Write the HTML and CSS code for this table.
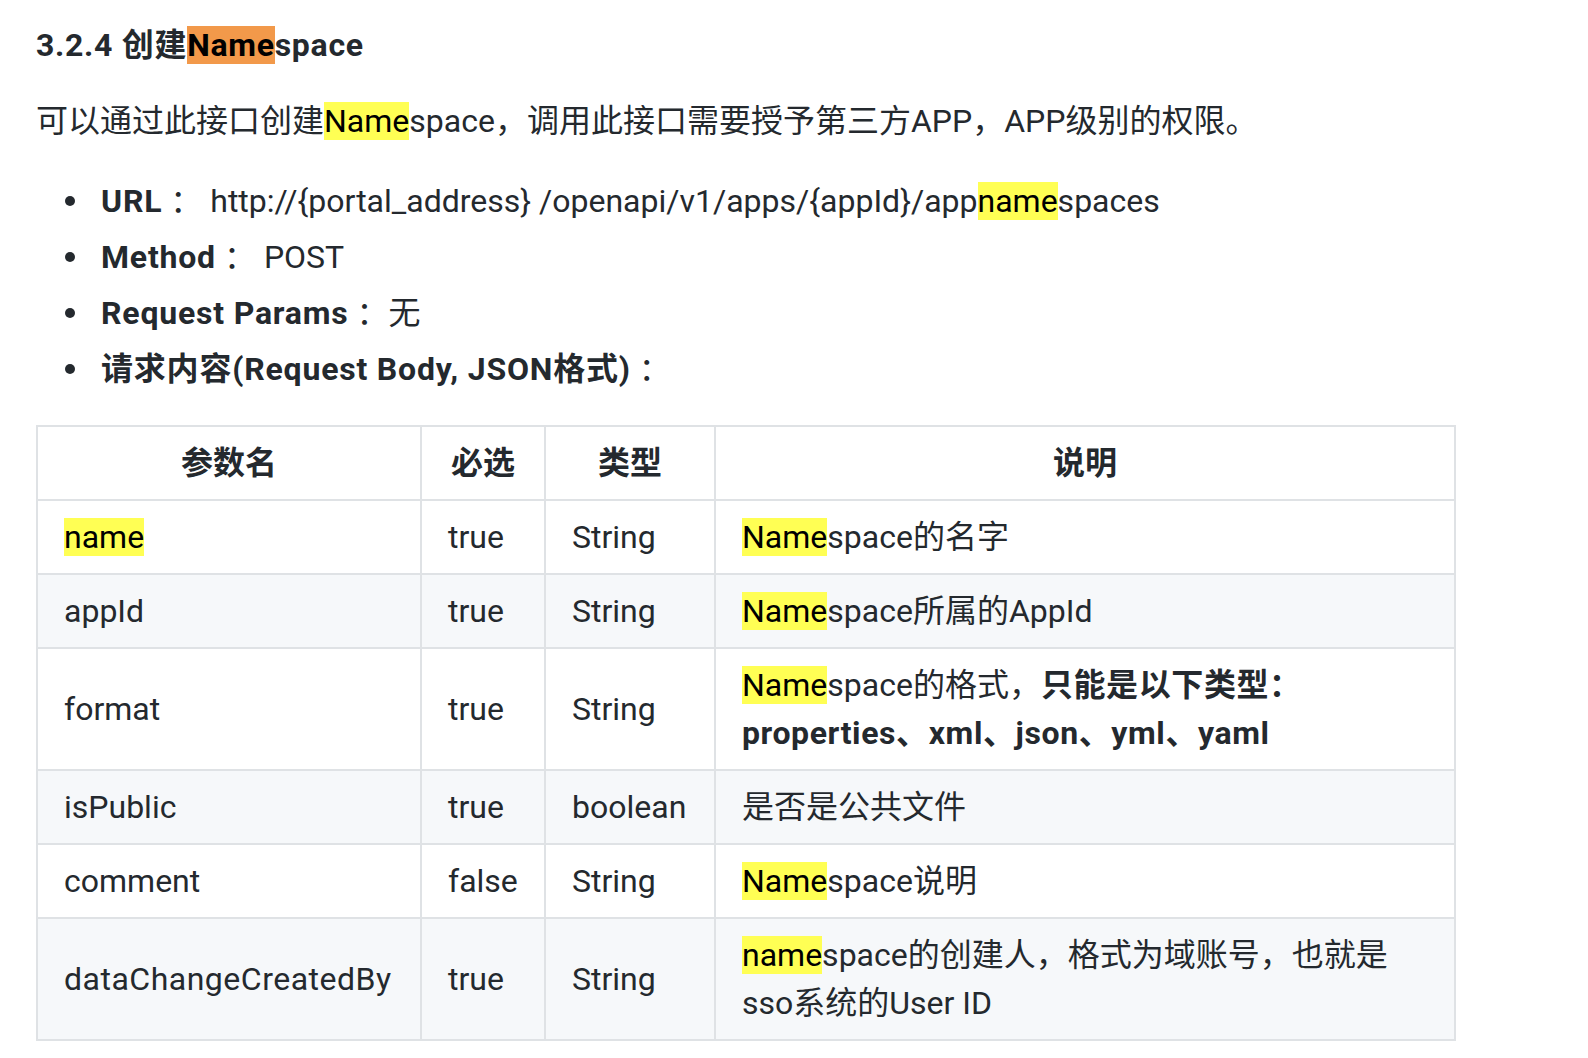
FILE: index.html
```html
<!DOCTYPE html>
<html lang="zh-CN">
<head>
<meta charset="utf-8">
<title>3.2.4 创建Namespace</title>
<link rel="stylesheet" href="styles.css">
</head>
<body>
<article class="doc">
  <h4 class="doc-title">3.2.4 创建<span class="hl hl-orange">Name</span>space</h4>
  <p class="doc-text">可以通过此接口创建<span class="hl">Name</span>space，调用此接口需要授予第三方APP，APP级别的权限。</p>
  <ul class="doc-list">
    <li><strong>URL</strong><span class="sep">：</span> http://{portal_address} /openapi/v1/apps/{appId}/app<span class="hl">name</span>spaces</li>
    <li><strong>Method</strong><span class="sep">：</span> POST</li>
    <li><strong>Request Params</strong><span class="sep">：</span>无</li>
    <li><strong>请求内容(Request Body, JSON格式)</strong><span class="sep">：</span></li>
  </ul>
  <table class="params">
    <colgroup>
      <col class="col-name">
      <col class="col-req">
      <col class="col-type">
      <col class="col-desc">
    </colgroup>
    <thead>
      <tr><th>参数名</th><th>必选</th><th>类型</th><th>说明</th></tr>
    </thead>
    <tbody>
      <tr><td><span class="hl">name</span></td><td>true</td><td>String</td><td><span class="hl">Name</span>space的名字</td></tr>
      <tr><td>appId</td><td>true</td><td>String</td><td><span class="hl">Name</span>space所属的AppId</td></tr>
      <tr><td>format</td><td>true</td><td>String</td><td><span class="hl">Name</span>space的格式，<strong>只能是以下类型：<br>properties、xml、json、yml、yaml</strong></td></tr>
      <tr><td>isPublic</td><td>true</td><td>boolean</td><td>是否是公共文件</td></tr>
      <tr><td>comment</td><td>false</td><td>String</td><td><span class="hl">Name</span>space说明</td></tr>
      <tr><td class="long">dataChangeCreatedBy</td><td>true</td><td>String</td><td><span class="hl">name</span>space的创建人，格式为域账号，也就是<br>sso系统的User ID</td></tr>
    </tbody>
  </table>
</article>
</body>
</html>
```
FILE: styles.css
```css
html, body {
  margin: 0;
  padding: 0;
  background: #ffffff;
}

body {
  font-family: "Roboto", "Noto Sans CJK SC", sans-serif;
  font-size: 32px;
  line-height: 1.5;
  color: #24292e;
}

.doc {
  padding: 25px 0 0 36px;
  width: 1420px;
}

.doc-title {
  margin: 0 0 32px;
  font-size: 32px;
  line-height: 1.25;
  font-weight: 700;
  letter-spacing: 0.7px;
}

.doc-text {
  margin: 0 0 32px;
}

.doc-list {
  margin: 0 0 32px;
  padding-left: 65px;
  list-style: none;
}

.doc-list li::before {
  content: "";
  display: inline-block;
  width: 10px;
  height: 10px;
  border-radius: 50%;
  background: #24292e;
  margin-left: -36px;
  margin-right: 26px;
  vertical-align: 6px;
}

.doc-list li + li {
  margin-top: 8px;
}

.doc-list strong {
  font-weight: 700;
  letter-spacing: 0.8px;
}

.sep {
  font-family: "Noto Sans CJK TC", sans-serif;
  line-height: 32px;
  margin-left: 8px;
}

.hl {
  background: #ffff54;
  color: #000000;
}

.hl-orange {
  background: #f2994a;
}

.params {
  border-collapse: collapse;
  border-spacing: 0;
  table-layout: fixed;
  width: 1418px;
}

.col-name { width: 384px; }
.col-req { width: 124px; }
.col-type { width: 170px; }
.col-desc { width: 740px; }

.params th,
.params td {
  border: 2px solid #dfe2e5;
  padding: 12px 26px;
  text-align: left;
  vertical-align: middle;
}

.params th {
  text-align: center;
  font-weight: 700;
}

.params tbody tr:nth-child(even) {
  background: #f6f8fa;
}

.params strong {
  font-weight: 700;
  letter-spacing: 0.6px;
}

.params .long {
  letter-spacing: 0.5px;
}
```
